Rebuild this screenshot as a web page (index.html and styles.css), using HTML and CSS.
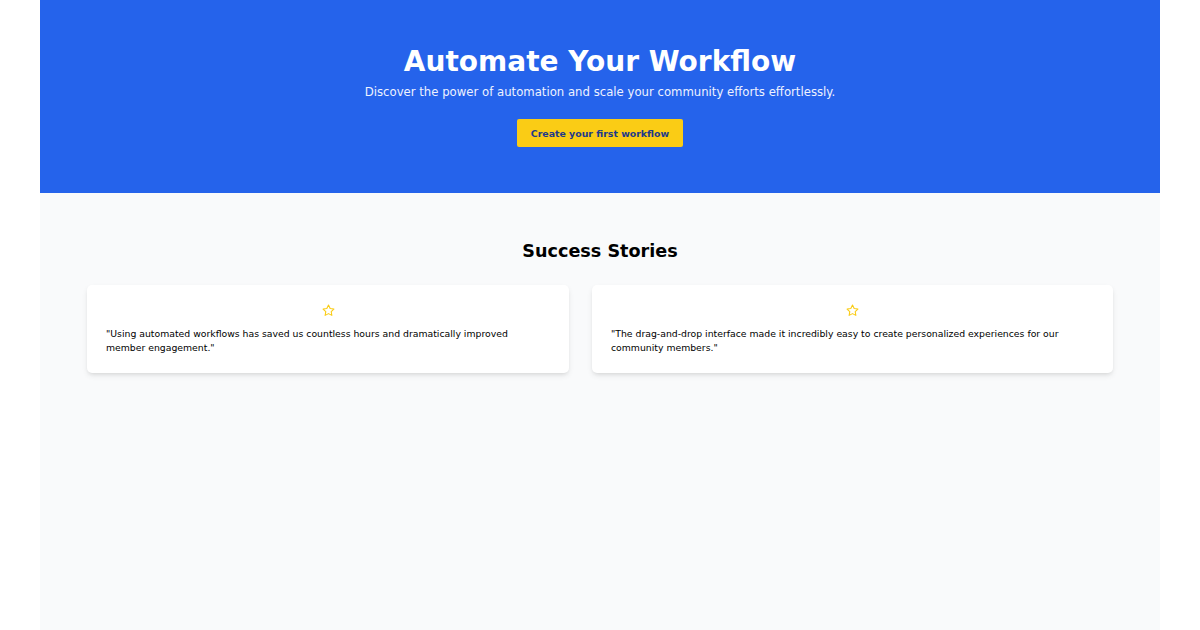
FILE: index.html
```html
<!DOCTYPE html>
<html lang="en">
<head>
<meta charset="utf-8">
<title>Automate Your Workflow</title>
<link rel="stylesheet" href="styles.css">
</head>
<body>
<div class="page">
  <header class="hero">
    <h1 class="hero-title">Automate Your Workflow</h1>
    <p class="hero-sub">Discover the power of automation and scale your community efforts effortlessly.</p>
    <button class="cta">Create your first workflow</button>
  </header>
  <section class="stories">
    <h2 class="stories-title">Success Stories</h2>
    <div class="cards">
      <div class="card">
        <svg class="star" viewBox="0 0 24 24" width="13" height="13" fill="none" stroke="#facc15" stroke-width="2" stroke-linejoin="round" stroke-linecap="round"><polygon points="12 2 15.09 8.26 22 9.27 17 14.14 18.18 21.02 12 17.77 5.82 21.02 7 14.14 2 9.27 8.91 8.26 12 2"/></svg>
        <p class="quote">"Using automated workflows has saved us countless hours and dramatically improved member engagement."</p>
      </div>
      <div class="card">
        <svg class="star" viewBox="0 0 24 24" width="13" height="13" fill="none" stroke="#facc15" stroke-width="2" stroke-linejoin="round" stroke-linecap="round"><polygon points="12 2 15.09 8.26 22 9.27 17 14.14 18.18 21.02 12 17.77 5.82 21.02 7 14.14 2 9.27 8.91 8.26 12 2"/></svg>
        <p class="quote">"The drag-and-drop interface made it incredibly easy to create personalized experiences for our community members."</p>
      </div>
    </div>
  </section>
</div>
</body>
</html>
```
FILE: styles.css
```css
html, body {
  margin: 0;
  padding: 0;
  background: #ffffff;
  font-family: "DejaVu Sans", sans-serif;
}
.page {
  width: 1120px;
  margin: 0 auto;
  min-height: 630px;
  background: #f9fafb;
}
.hero {
  background: #2563eb;
  color: #ffffff;
  text-align: center;
  padding: 44px 0 46px;
  display: flex;
  flex-direction: column;
  align-items: center;
}
.hero-title {
  margin: 0;
  font-size: 28px;
  line-height: 36px;
  font-weight: 700;
}
.hero-sub {
  margin: 3px 0 0;
  font-size: 11.7px;
  line-height: 19px;
  color: #eef2ff;
}
.cta {
  margin-top: 17px;
  height: 28px;
  width: 166px;
  padding: 0;
  border: none;
  border-radius: 2px;
  background: #facc15;
  color: #1e3a8a;
  font-family: "DejaVu Sans", sans-serif;
  font-size: 9.4px;
  font-weight: 700;
}
.stories {
  padding: 44px 47px 40px;
}
.stories-title {
  margin: 0;
  text-align: center;
  font-size: 17.6px;
  line-height: 28px;
  font-weight: 700;
  color: #000000;
}
.cards {
  margin-top: 20px;
  display: grid;
  grid-template-columns: 482fr 521fr;
  gap: 23px;
}
.card {
  background: #ffffff;
  border-radius: 5px;
  padding: 19px 19px 18px;
  box-shadow: 0 3px 6px -1px rgba(0,0,0,0.1), 0 2px 4px -2px rgba(0,0,0,0.1);
  display: flex;
  flex-direction: column;
  align-items: center;
}
.star {
  display: block;
}
.quote {
  margin: 10px 0 0;
  align-self: stretch;
  font-size: 9.3px;
  line-height: 14px;
  color: #000000;
}
```
